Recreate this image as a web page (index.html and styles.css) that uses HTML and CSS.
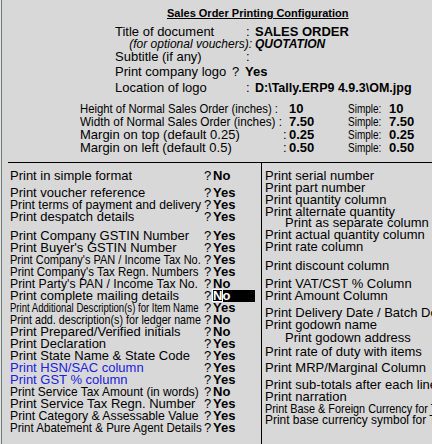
FILE: index.html
```html
<!DOCTYPE html>
<html>
<head>
<meta charset="utf-8">
<title>Sales Order Printing Configuration</title>
<link rel="stylesheet" href="styles.css">
</head>
<body>
<div class="win">
  <h1 class="title"><span>Sales Order Printing Configuration</span></h1>

  <div class="head">
    <span class="span2">Title of document</span><span>:</span><b>SALES ORDER</b>
    <span class="opt">(for optional vouchers):</span><b class="quo">QUOTATION</b>
    <span class="span2">Subtitle (if any)</span><span>:</span><span></span>
    <span>Print company logo</span><span>?</span><b class="span34">Yes</b>
    <span class="span2">Location of logo</span><span>:</span><b class="path">D:\Tally.ERP9 4.9.3\OM.jpg</b>
  </div>

  <div class="dims">
    <span><span class="sq s87">Height of Normal Sales Order (inches) :</span></span><span></span><b>10</b><span><span class="sq s77">Simple:</span></span><b>10</b>
    <span><span class="sq s90">Width of Normal Sales Order (inches) :</span></span><span></span><b>7.50</b><span><span class="sq s77">Simple:</span></span><b>7.50</b>
    <span>Margin on top (default 0.25)</span><span>:</span><b>0.25</b><span><span class="sq s77">Simple:</span></span><b>0.25</b>
    <span>Margin on left (default 0.5)</span><span>:</span><b>0.50</b><span><span class="sq s77">Simple:</span></span><b>0.50</b>
  </div>

  <div class="panel">
    <div class="colL">
      <div class="row mt7"><span>Print in simple format</span><span>?</span><b>No</b></div>
      <div class="row mt5"><span>Print voucher reference</span><span>?</span><b>Yes</b></div>
      <div class="row"><span class="sq s93">Print terms of payment and delivery</span><span>?</span><b>Yes</b></div>
      <div class="row"><span>Print despatch details</span><span>?</span><b>Yes</b></div>
      <div class="row mt7"><span>Print Company GSTIN Number</span><span>?</span><b>Yes</b></div>
      <div class="row"><span>Print Buyer's GSTIN Number</span><span>?</span><b>Yes</b></div>
      <div class="row"><span class="sq s85">Print Company's PAN / Income Tax No.</span><span>?</span><b>Yes</b></div>
      <div class="row"><span class="sq s88">Print Company's Tax Regn. Numbers</span><span>?</span><b>Yes</b></div>
      <div class="row"><span class="sq s94">Print Party's PAN / Income Tax No.</span><span>?</span><b>No</b></div>
      <div class="row"><span>Print complete mailing details</span><span>?</span><b class="cur"><span class="cn">N</span>o</b></div>
      <div class="row"><span class="sq s73">Print Additional Description(s) for Item Name</span><span>?</span><b>Yes</b></div>
      <div class="row"><span class="sq s82">Print add. description(s) for ledger name</span><span>?</span><b>No</b></div>
      <div class="row"><span>Print Prepared/Verified initials</span><span>?</span><b>No</b></div>
      <div class="row"><span>Print Declaration</span><span>?</span><b>Yes</b></div>
      <div class="row"><span>Print State Name &amp; State Code</span><span>?</span><b>Yes</b></div>
      <div class="row blue"><span>Print HSN/SAC column</span><span>?</span><b>Yes</b></div>
      <div class="row blue"><span>Print GST % column</span><span>?</span><b>Yes</b></div>
      <div class="row"><span class="sq s92">Print Service Tax Amount (in words)</span><span>?</span><b>No</b></div>
      <div class="row"><span>Print Service Tax Regn. Number</span><span>?</span><b>Yes</b></div>
      <div class="row"><span class="sq s94">Print Category &amp; Assessable Value</span><span>?</span><b>Yes</b></div>
      <div class="row"><span class="sq s89">Print Abatement &amp; Pure Agent Details</span><span>?</span><b>Yes</b></div>
    </div>
    <div class="colR">
      <div class="r mt7">Print serial number</div>
      <div class="r">Print part number</div>
      <div class="r">Print quantity column</div>
      <div class="r h11">Print alternate quantity</div>
      <div class="r ind">Print as separate column</div>
      <div class="r">Print actual quantity column</div>
      <div class="r">Print rate column</div>
      <div class="r mt7">Print discount column</div>
      <div class="r mt6">Print VAT/CST % Column</div>
      <div class="r">Print Amount Column</div>
      <div class="r mt5">Print Delivery Date / Batch Details</div>
      <div class="r">Print godown name</div>
      <div class="r h13 ind">Print godown address</div>
      <div class="r mt2">Print rate of duty with items</div>
      <div class="r mt4">Print MRP/Marginal Column</div>
      <div class="r mt5">Print sub-totals after each line</div>
      <div class="r">Print narration</div>
      <div class="r h11"><span class="sq s835">Print Base &amp; Foreign Currency for Total Amount</span></div>
      <div class="r h11"><span class="sq s92">Print base currency symbol for Total Amount</span></div>
    </div>
  </div>
</div>
</body>
</html>
```

FILE: styles.css
```css
* { box-sizing: border-box; }

html, body {
  margin: 0;
  padding: 0;
  overflow: hidden;
}

body {
  width: 432px;
  height: 444px;
  background: #e4e4e4;
  font-family: "Liberation Sans", Arial, sans-serif;
  font-size: 13px;
  color: #000;
}

b { font-weight: bold; }

.win {
  margin-left: 1px;
  width: 431px;
  height: 444px;
  border-left: 1px solid #6e7c7c;
  background: #d8d8d8;
}

.title {
  margin: 0;
  height: 26px;
  line-height: 26px;
  padding-left: 165px;
  font-size: 11px;
  font-weight: bold;
  white-space: nowrap;
}
.title span { text-decoration: underline; }

/* header block */
.head {
  display: grid;
  margin-left: 113px;
  grid-template-columns: 117px 14px 9px auto;
  grid-template-rows: 12px 12px 13px 17px 16px;
  align-items: center;
  line-height: 12px;
  white-space: nowrap;
}
.span2 { grid-column: 1 / 3; }
.span34 { grid-column: 3 / 5; margin-left: -1px; }
.opt {
  grid-column: 1 / 4;
  text-align: right;
  padding-right: 3px;
  font-size: 12px;
  font-style: italic;
}
.quo { font-size: 12px; font-style: italic; }
.path { font-size: 12.5px; }

/* dimensions block */
.dims {
  display: grid;
  margin-top: 6px;
  margin-left: 78px;
  grid-template-columns: 203px 6px 59px 41px auto;
  grid-auto-rows: 13px;
  line-height: 13px;
  white-space: nowrap;
}

/* squeezed labels */
.sq {
  display: inline-block;
  white-space: nowrap;
  transform-origin: 0 50%;
}
.s73 { transform: scaleX(0.735); }
.s77 { transform: scaleX(0.77); }
.s82 { transform: scaleX(0.823); }
.s835 { transform: scaleX(0.835); }
.s85 { transform: scaleX(0.847); }
.s87 { transform: scaleX(0.87); }
.s88 { transform: scaleX(0.884); }
.s89 { transform: scaleX(0.887); }
.s90 { transform: scaleX(0.905); }
.s92 { transform: scaleX(0.918); }
.s93 { transform: scaleX(0.934); }
.s94 { transform: scaleX(0.94); }

/* lower panel */
.panel {
  display: flex;
  margin-top: 8px;
  margin-left: 6px;
  height: 282px;
  border-top: 1px solid #000;
}

.colL {
  flex: none;
  width: 253px;
  padding-left: 2px;
}

.colR {
  flex: 1;
  border-left: 1px solid #000;
  padding-left: 3px;
  overflow: hidden;
  white-space: nowrap;
}

.row {
  display: grid;
  grid-template-columns: 194px 9px auto;
  height: 12px;
  line-height: 12px;
  white-space: nowrap;
}
.row > span:first-child { overflow: visible; }

.r {
  height: 12px;
  line-height: 12px;
}
.h11 { height: 11px; line-height: 11px; }
.h13 { height: 13px; line-height: 13px; }
.ind { padding-left: 20px; }

.mt2 { margin-top: 2px; }
.mt4 { margin-top: 4px; }
.mt5 { margin-top: 5px; }
.mt6 { margin-top: 6px; }
.mt7 { margin-top: 7px; }

.blue > span:first-child { color: #2020dc; }

.cur {
  display: block;
  margin-left: -1px;
  padding-left: 1px;
  width: 43px;
  height: 12px;
  background: #000;
  color: #fff;
}
.cn {
  display: inline-block;
  height: 11px;
  line-height: 11px;
  outline: 1px solid #fff;
}
```
